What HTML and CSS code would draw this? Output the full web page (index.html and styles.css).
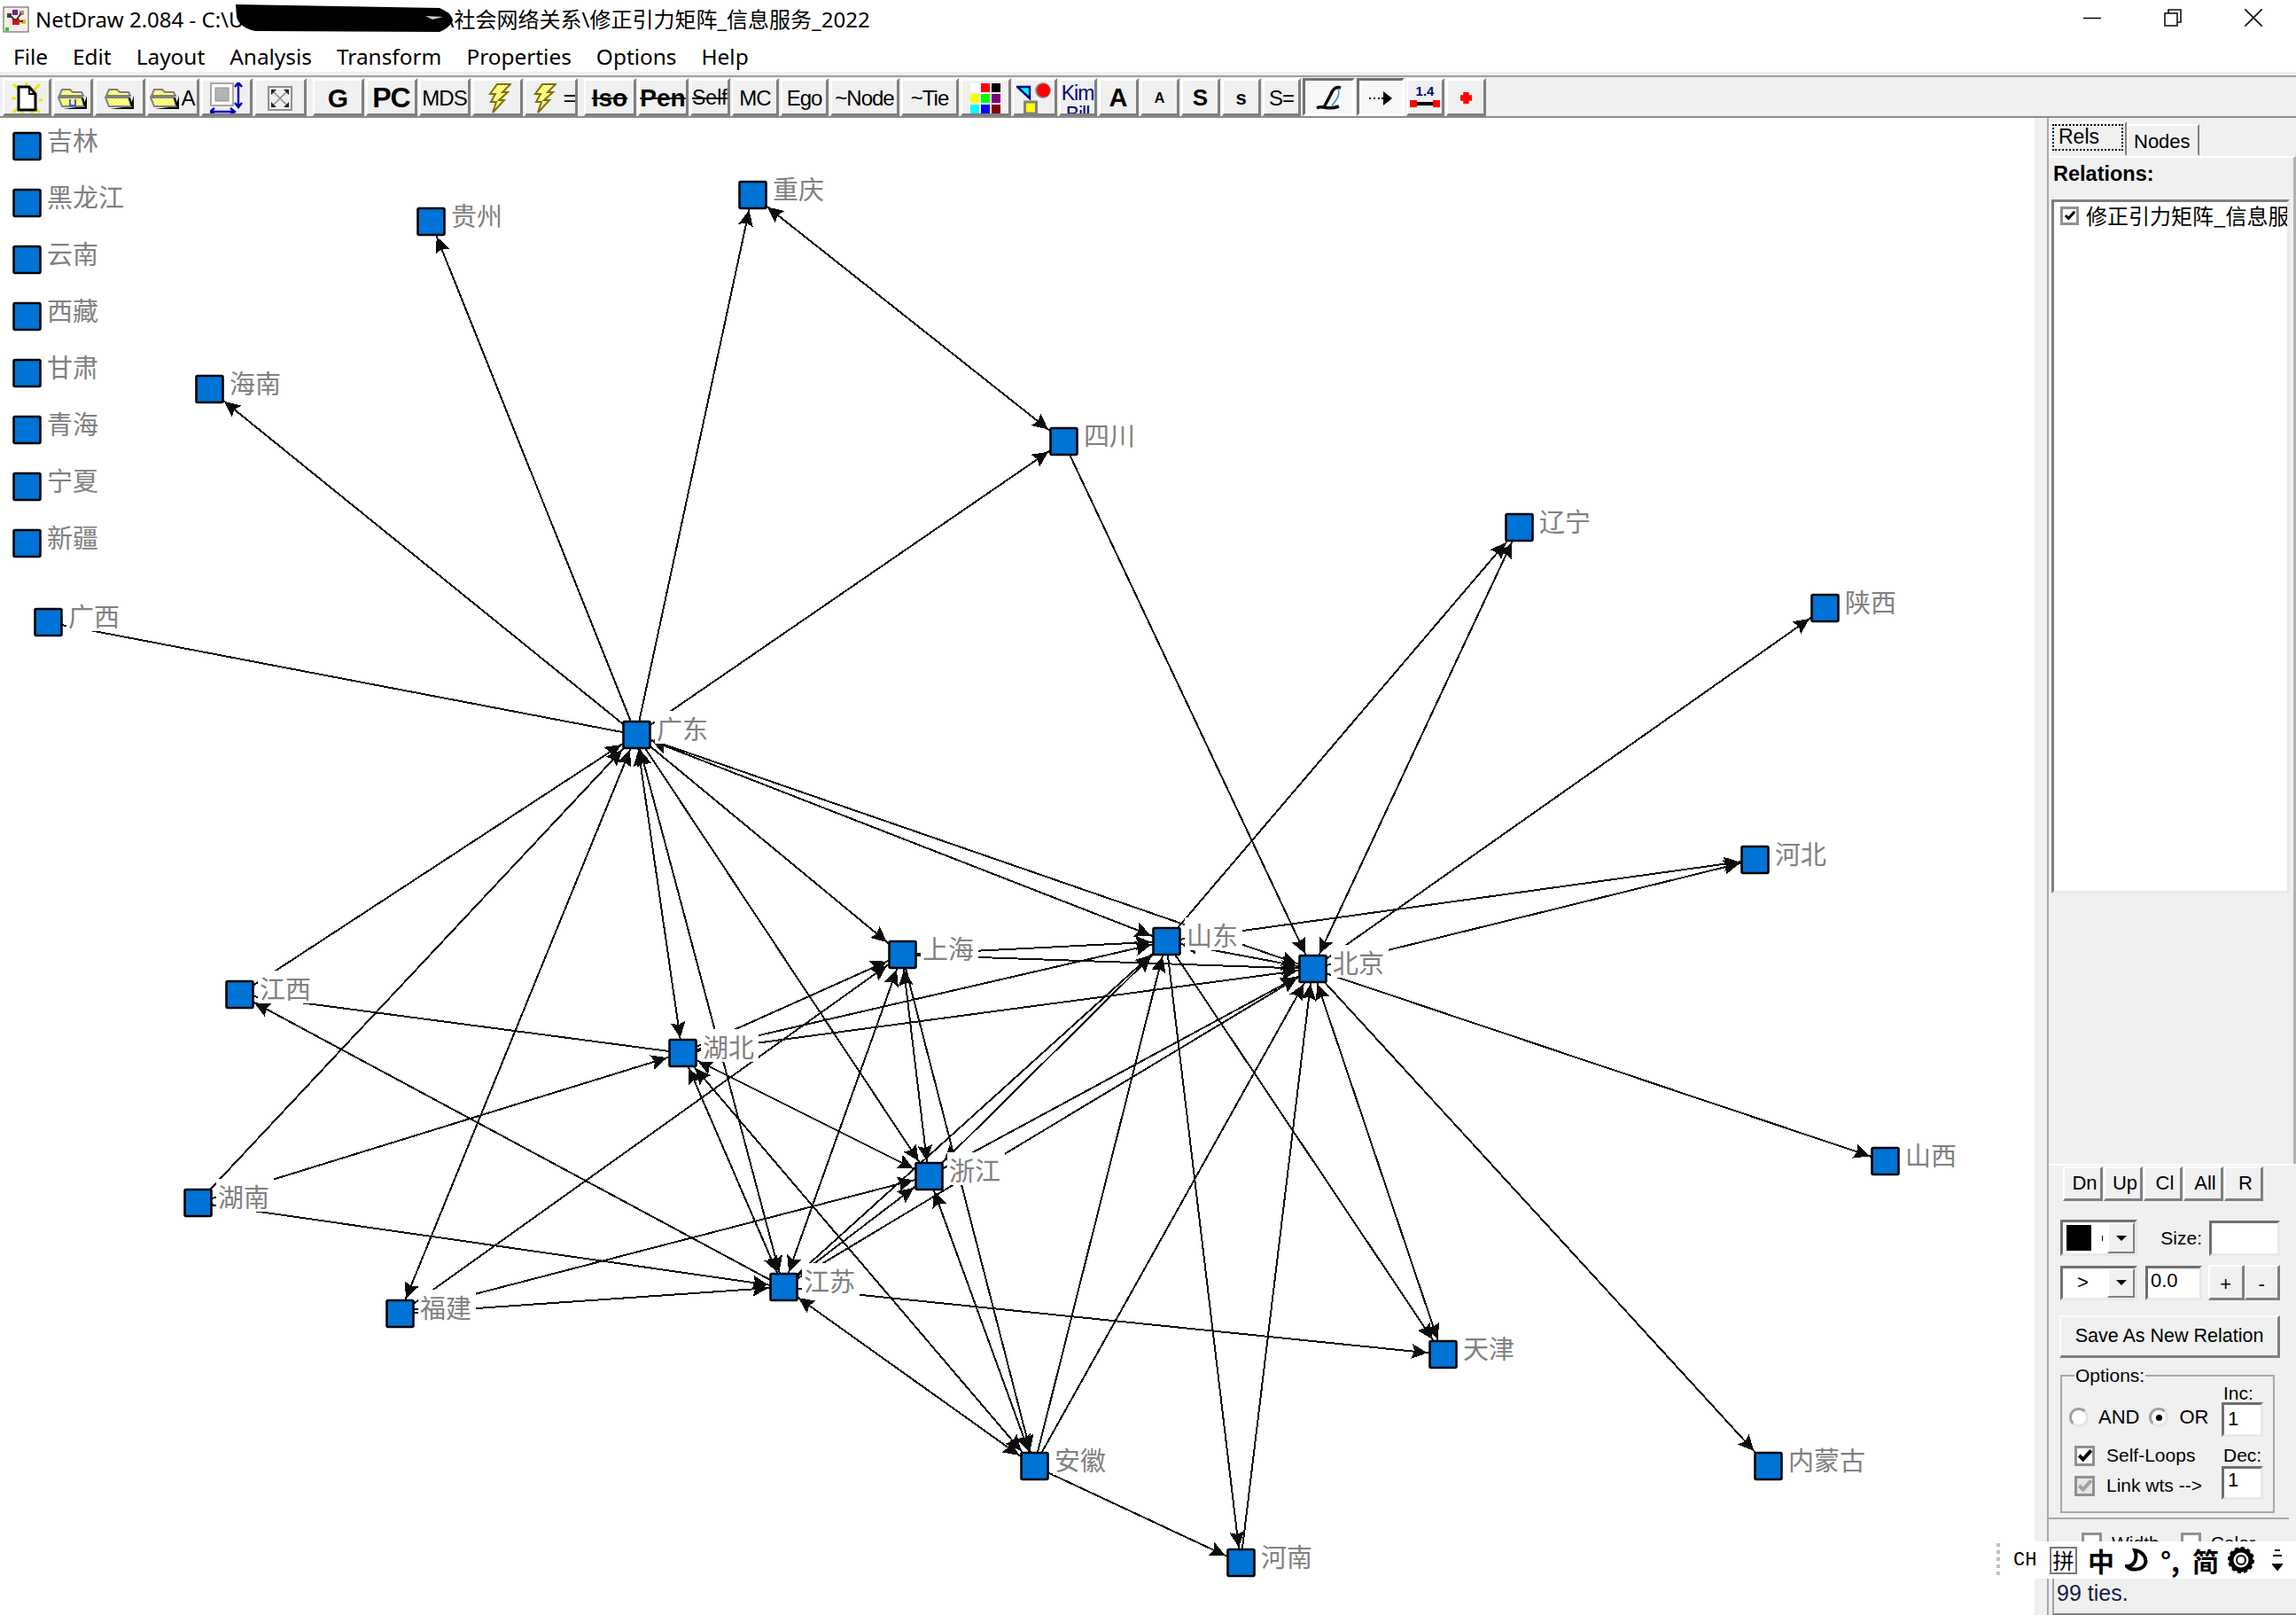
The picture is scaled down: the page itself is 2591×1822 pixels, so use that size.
FILE: index.html
```html
<!DOCTYPE html>
<html lang="zh">
<head>
<meta charset="utf-8">
<title>NetDraw 2.084</title>
<link rel="stylesheet" href="styles.css">
</head>
<body>
<div class="app">
  <header class="titlebar">
    <svg class="app-icon" width="30" height="30" viewBox="0 0 30 30">
      <rect x="1" y="1" width="28" height="28" fill="#f4f0e8" stroke="#555"/>
      <rect x="11" y="4" width="6" height="6" fill="#7a1f8a"/><rect x="5" y="8" width="5" height="5" fill="#444"/>
      <rect x="19" y="5" width="5" height="5" fill="#999"/><rect x="11" y="14" width="8" height="7" fill="#d11"/>
      <rect x="21" y="15" width="5" height="5" fill="#e0c000"/><rect x="3" y="24" width="4" height="4" fill="#2c2"/>
      <path d="M8 10 L14 16 M21 8 L15 16 M19 17 L23 17" stroke="#333" stroke-width="2"/>
    </svg>
    <span class="title-text">NetDraw 2.084 - C:\U</span>
    <svg class="blob" width="250" height="36" viewBox="0 0 250 36"><path d="M2 4 L232 8 Q246 14 247 22 Q244 30 232 35 L24 34 Q6 30 3 18 Z" fill="#000"/><path d="M216 17 L236 18 L224 21 Z" fill="#ccc"/></svg>
    <span class="title-text">\社会网络关系\修正引力矩阵_信息服务_2022</span>
    <div class="winctl">
      <svg width="20" height="20" viewBox="0 0 20 20"><path d="M0 10.5H20" stroke="#111" stroke-width="1.6"/></svg>
      <svg width="20" height="20" viewBox="0 0 20 20" fill="none" stroke="#111" stroke-width="1.6"><rect x="1" y="5" width="14" height="14"/><path d="M5 5V1H19V15H15"/></svg>
      <svg width="20" height="20" viewBox="0 0 20 20"><path d="M0 0L20 20M20 0L0 20" stroke="#111" stroke-width="1.6"/></svg>
    </div>
  </header>

  <nav class="menubar">
    <span>File</span><span>Edit</span><span>Layout</span><span>Analysis</span><span>Transform</span><span>Properties</span><span>Options</span><span>Help</span>
  </nav>

  <div class="toolbar">
    <svg class="defs" width="0" height="0">
      <defs>
        <pattern id="dith" width="4" height="4" patternUnits="userSpaceOnUse"><rect width="4" height="4" fill="#fff"/><rect width="2" height="2" fill="#ff0"/><rect x="2" y="2" width="2" height="2" fill="#ff0"/></pattern>
        <symbol id="folder" viewBox="0 0 34 26">
          <path d="M6 25H33V10L29 22Z" fill="#000"/>
          <path d="M2 10L5 3H14L17 6H27L29 10Z" fill="url(#dith)" stroke="#808080" stroke-width="2"/>
          <path d="M1 12H27L30 22H5Z" fill="url(#dith)" stroke="#808080" stroke-width="2"/>
          <path d="M28 12L31 22" stroke="#000" stroke-width="2"/>
        </symbol>
        <symbol id="bolt" viewBox="0 0 26 34">
          <path d="M10 1H25L16 10H22L12 19H18L5 33L9 21H3L8 12H2Z" fill="url(#dith)" stroke="#807000" stroke-width="2"/>
        </symbol>
      </defs>
    </svg>
    <button class="tb w55">
      <svg width="36" height="36" viewBox="0 0 36 36"><path d="M3 2L10 9M33 2L26 9M1 18H6M32 20H36M3 34L9 28M33 34L27 28M18 0V4M13 32V36M24 32V36" stroke="#e8e800" stroke-width="3"/><path d="M9 5H21L28 13V31H9Z" fill="#fff" stroke="#000" stroke-width="3"/><path d="M21 5V13H28" fill="none" stroke="#000" stroke-width="2"/></svg>
    </button>
    <button class="tb w45"><svg width="34" height="26"><use href="#folder"/><path d="M14 14V21H20V14" fill="none" stroke="#4060e0" stroke-width="2"/></svg></button>
    <button class="tb w57"><svg width="34" height="26"><use href="#folder"/></svg></button>
    <button class="tb w59"><span class="row-ic"><svg width="34" height="26"><use href="#folder"/></svg><span class="ic-a">A</span></span></button>
    <button class="tb w58">
      <svg width="38" height="36" viewBox="0 0 38 36"><rect x="1" y="1" width="25" height="25" fill="#fff" stroke="#a8a8a8" stroke-width="2"/><rect x="6" y="6" width="15" height="15" fill="#b4b4b4" stroke="#909090" stroke-width="1"/><path d="M32 1V27M28 5L32 0L36 5M28 23L32 28L36 23M1 33H27M5 29L0 33L5 36M23 29L28 33L23 36" fill="none" stroke="#0000c0" stroke-width="2.4"/></svg>
    </button>
    <button class="tb w59">
      <svg width="28" height="28" viewBox="0 0 28 28"><rect x="1" y="1" width="26" height="26" fill="none" stroke="#909090" stroke-width="2"/><path d="M7 7L21 21M21 7L7 21" stroke="#909090" stroke-width="1.6"/><path d="M4 4H10L4 10ZM24 4H18L24 10ZM4 24H10L4 18ZM24 24H18L24 18Z" fill="#222"/></svg>
    </button>
    <i class="tb-sep"></i>
    <button class="tb w58 t-g">G</button>
    <button class="tb w58 t-pc">PC</button>
    <button class="tb w58 t-m">MDS</button>
    <button class="tb w57 shift-a"><svg width="26" height="34"><use href="#bolt"/></svg></button>
    <button class="tb w60 shift-b"><span class="row-ic"><svg width="26" height="34"><use href="#bolt"/></svg><span class="ic-eq">=</span></span></button>
    <i class="tb-sep"></i>
    <button class="tb w59 t-s">Iso</button>
    <button class="tb w57 t-s">Pen</button>
    <button class="tb w45 t-self">Self</button>
    <button class="tb w53 t-m">MC</button>
    <button class="tb w54 t-m">Ego</button>
    <button class="tb w78 t-m">~Node</button>
    <button class="tb w65 t-m">~Tie</button>
    <button class="tb w57">
      <svg width="34" height="34" viewBox="0 0 34 34" class="crisp"><rect width="10" height="10" fill="#fff"/><rect x="12" width="10" height="10" fill="#f00"/><rect x="24" width="10" height="10" fill="#000"/><rect y="12" width="10" height="10" fill="#ff0"/><rect x="12" y="12" width="10" height="10" fill="#0f0"/><rect x="24" y="12" width="10" height="10" fill="#800080"/><rect y="24" width="10" height="10" fill="#0ff"/><rect x="12" y="24" width="10" height="10" fill="#00f"/><rect x="24" y="24" width="10" height="10" fill="#800000"/></svg>
    </button>
    <button class="tb w50">
      <svg width="42" height="36" viewBox="0 0 42 36"><path d="M1 5H15V18Z" fill="#0ff" stroke="#000080" stroke-width="2.4"/><circle cx="30" cy="9" r="9" fill="#909090"/><circle cx="30.500" cy="9" r="7.500" fill="#f00"/><rect x="9.500" y="22" width="13" height="13" fill="#ff0" stroke="#808080" stroke-width="3"/></svg>
    </button>
    <button class="tb w43 t-kim"><span>Kim</span><span>Bill</span></button>
    <button class="tb w45 t-ab">A</button>
    <button class="tb w44 t-as">A</button>
    <button class="tb w44 t-sb">S</button>
    <button class="tb w44 t-ss">s</button>
    <button class="tb w43 t-m">S=</button>
    <button class="tb tb-on w59">
      <svg width="30" height="30" viewBox="0 0 30 30"><path d="M22 4C19 6 17 10 15 14L8 26" fill="none" stroke="#e89030" stroke-width="2"/><path d="M25 5C26 6 28 12 18 23" fill="none" stroke="#3090e0" stroke-width="1.500"/><path d="M28 3C22 1 19 5 17 10L9 25M1 26C8 22 12 29 26 24" fill="none" stroke="#111" stroke-width="3.500"/></svg>
    </button>
    <button class="tb tb-on w54">
      <svg width="26" height="16" viewBox="0 0 26 16"><path d="M0 8H2M5 8H7M10 8H12M14 8H20" stroke="#000" stroke-width="2"/><path d="M16 0L26 8L16 16Z" fill="#000"/></svg>
    </button>
    <button class="tb w43">
      <svg width="34" height="32" viewBox="0 0 34 32"><text x="17" y="13" class="weight-label">1.4</text><rect y="18" width="8" height="8" fill="#f00"/><rect x="26" y="18" width="8" height="8" fill="#f00"/><rect x="8" y="20" width="18" height="4" fill="#000"/></svg>
    </button>
    <button class="tb w45">
      <svg width="13" height="13" viewBox="0 0 12 12"><path d="M3 0H9V3H12V9H9V12H3V9H0V3H3Z" fill="#f00"/></svg>
    </button>
  </div>

  <main class="workspace">
    <div class="canvas"><svg id="graph" class="graph" width="2296" height="1689" viewBox="0 133 2296 1689"></svg></div>

    <aside class="side">
      <div class="side-inner">
        <div class="tabs">
          <div class="tab tab-active"><span class="focus">Rels</span></div>
          <div class="tab">Nodes</div>
        </div>
        <section class="page">
          <div class="rel-title">Relations:</div>
          <div class="listbox">
            <div class="list-item"><span class="check small"><svg width="16" height="14" viewBox="0 0 16 14"><path d="M2 7L6 11L14 2" fill="none" stroke="#000" stroke-width="3.500"/></svg></span><span class="item-text">修正引力矩阵_信息服务_2022</span></div>
          </div>
        </section>
        <section class="controls">
          <div class="updown">
            <button class="btn ud w45b">Dn</button><button class="btn ud w44b">Up</button><button class="btn ud w44b">Cl</button><button class="btn ud w45b">All</button><button class="btn ud w44b">R</button>
          </div>
          <div class="row r1">
            <div class="combo c1"><span class="swatch"></span><span class="tick"></span><span class="drop"><i></i></span></div>
            <label class="size-label">Size:</label>
            <div class="input size-in"></div>
          </div>
          <div class="row r2">
            <div class="combo c2"><span class="combo-text">&gt;</span><span class="drop"><i></i></span></div>
            <div class="input val">0.0</div>
            <button class="btn pm">+</button><button class="btn pm">-</button>
          </div>
          <button class="btn save">Save As New Relation</button>
          <fieldset class="options">
            <legend>Options:</legend>
            <div class="opt-body">
              <div class="opt-left">
                <div class="radios">
                  <span class="radio"></span><span class="r-and">AND</span>
                  <span class="radio on"></span><span class="r-or">OR</span>
                </div>
                <div class="chk c-self"><span class="check"><svg width="18" height="16" viewBox="0 0 16 14"><path d="M2 7L6 11L14 2" fill="none" stroke="#000" stroke-width="3.500"/></svg></span><span>Self-Loops</span></div>
                <div class="chk c-link"><span class="check off"><svg width="18" height="16" viewBox="0 0 16 14"><path d="M2 7L6 11L14 2" fill="none" stroke="#a0a0a0" stroke-width="3.500"/></svg></span><span>Link wts --&gt;</span></div>
              </div>
              <div class="opt-right">
                <div class="o-lab">Inc:</div><div class="input o-in">1</div>
                <div class="o-lab dec">Dec:</div><div class="input o-in d2">1</div>
              </div>
            </div>
          </fieldset>
        </section>
        <section class="extra">
          <span class="check"></span><span class="ex-t">Width</span>
          <span class="check ex2"></span><span class="ex-t">Color</span>
        </section>
        <footer class="status">99 ties.</footer>
      </div>
    </aside>
  </main>

  <div class="ime">
    <i class="ime-handle"></i>
    <span class="ime-ch">CH</span>
    <span class="ime-pin">拼</span>
    <span class="ime-zh">中</span>
    <svg class="ime-moon" width="26" height="28" viewBox="0 0 26 28"><path d="M11 3C20 4 25 12 23 18C20 25 8 27 2 21C10 21 15 13 11 3Z" fill="#fff" stroke="#000" stroke-width="4"/></svg>
    <span class="ime-punct">°,</span>
    <span class="ime-zh s2">简</span>
    <svg class="ime-gear" width="30" height="30" viewBox="0 0 30 30"><circle cx="15" cy="15" r="11" fill="none" stroke="#000" stroke-width="5"/><circle cx="15" cy="15" r="13.500" fill="none" stroke="#000" stroke-width="3" stroke-dasharray="4 3"/><circle cx="15" cy="15" r="5" fill="none" stroke="#000" stroke-width="2"/></svg>
    <svg class="ime-arrows" width="12" height="26" viewBox="0 0 12 26"><path d="M1 8H11M1 18H11L6 24Z" stroke="#000" stroke-width="2"/><path d="M3 2H9" stroke="#000" stroke-width="2"/></svg>
  </div>
</div>
<script src="graph.js"></script>
</body>
</html>
```

FILE: styles.css
```css
* { box-sizing: border-box; }
html, body { margin: 0; padding: 0; background: #fff; }
body { font-family: "Liberation Sans", "Noto Sans CJK SC", sans-serif; color: #000; overflow: hidden; }
.app { width: 2591px; height: 1822px; display: flex; flex-direction: column; position: relative; overflow: hidden; }

.titlebar { height: 44px; display: flex; align-items: center; padding-left: 3px; flex: none; font-family: "Noto Sans", "Noto Sans CJK SC", sans-serif; font-size: 24px; }
.app-icon { margin-right: 7px; flex: none; }
.title-text { white-space: nowrap; line-height: 30px; }
.blob { flex: none; margin-left: -12px; margin-right: -10px; position: relative; top: -3px; }
.winctl { margin-left: auto; display: flex; gap: 71px; padding-right: 38px; position: relative; top: -2px; }

.menubar { height: 37px; display: flex; gap: 28px; padding: 2px 0 0 15px; align-items: center; flex: none; font-family: "Noto Sans", sans-serif; font-size: 24.400px; white-space: nowrap; }

.toolbar { height: 52px; flex: none; background: #f0f0f0; padding: 7px 0 0 3px; display: flex; gap: 2px; border-bottom: 2px solid #8c8c8c; position: relative; }
.toolbar::before { content: ""; position: absolute; left: 0; right: 0; top: 4px; height: 2px; background: #a0a0a0; }
.defs { position: absolute; }
.tb { height: 43px; padding: 2px 0 0; margin: 0; flex: none; background: #f0f0f0; border: 2px solid; border-color: #fff #808080 #808080 #fff; border-top-width: 3px; border-bottom-width: 3px; border-right-width: 3px; display: flex; align-items: center; justify-content: center; overflow: hidden; font-family: "Liberation Sans", sans-serif; color: #000; white-space: nowrap; }
.tb-on { background: #f8f8f8; border-color: #707070 #fff #fff #707070; border-width: 3px; }
.tb-sep { width: 3px; flex: none; }
.w43 { width: 43px; } .w44 { width: 44px; } .w45 { width: 45px; } .w50 { width: 50px; } .w53 { width: 53px; } .w54 { width: 54px; } .w55 { width: 55px; } .w57 { width: 57px; } .w58 { width: 58px; } .w59 { width: 59px; } .w60 { width: 60px; } .w65 { width: 65px; } .w78 { width: 78px; }
.shift-a { padding-left: 5px; }
.shift-b { padding-left: 10px; }
.row-ic { display: flex; align-items: center; }
.ic-a { font-size: 24px; margin-left: 1px; }
.ic-eq { font-size: 26px; margin-left: 7px; }
.t-g { font-size: 30px; font-weight: bold; }
.t-pc { font-size: 32px; font-weight: bold; letter-spacing: -1px; }
.t-m { font-size: 24px; letter-spacing: -1px; }
.t-s { font-size: 28px; font-weight: bold; text-decoration: line-through; }
.t-self { font-size: 23px; text-decoration: line-through; justify-content: flex-start; }
.t-kim { flex-direction: column; justify-content: flex-start; color: #000080; font-size: 23px; line-height: 24px; letter-spacing: -1px; padding-top: 2px; }
.t-kim span { display: block; }
.t-ab { font-size: 29px; font-weight: bold; }
.t-as { font-size: 16px; font-weight: bold; }
.t-sb { font-size: 26px; font-weight: bold; }
.t-ss { font-size: 22px; font-weight: bold; }
.weight-label { font: bold 15px "Liberation Sans", sans-serif; fill: #000080; text-anchor: middle; }
.crisp { shape-rendering: crispEdges; }

.workspace { flex: 1; display: flex; min-height: 0; }
.canvas { width: 2296px; background: #fff; overflow: hidden; flex: none; }
.graph { display: block; }
.edge { stroke: #0c0c0c; stroke-width: 2; shape-rendering: crispEdges; }
.head { fill: #0c0c0c; shape-rendering: crispEdges; }
.lab-bg { fill: #fff; }
.lab { font-family: "Noto Sans CJK SC", sans-serif; font-size: 29px; fill: #808080; }
.node { fill: #0073d6; stroke: #000; stroke-width: 2.6; }

.side { width: 295px; flex: none; background: #f0f0f0; padding-left: 14px; }
.side-inner { height: 100%; display: flex; flex-direction: column; border-left: 2px solid #a8a8a8; font-size: 22px; }

.tabs { height: 43px; flex: none; display: flex; padding-top: 4px; align-items: flex-end; }
.tab { height: 36px; width: 82px; border: 2px solid; border-color: #fff #808080 transparent #fff; font-size: 22px; padding: 5px 0 0 6px; }
.tab-active { width: 88px; height: 39px; padding: 1px 0 0 2px; }
.focus { display: block; height: 30px; width: 80px; border: 2px dotted #000; padding-left: 5px; line-height: 24px; font-size: 23px; }

.page { height: 1137px; flex: none; border-top: 2px solid #fff; border-right: 3px solid #b0b0b0; padding: 5px 4px 0 3px; }
.rel-title { font-weight: bold; font-size: 23.500px; height: 42px; line-height: 26px; padding-left: 2px; }
.listbox { height: 783px; background: #fff; border: 3px solid; border-color: #808080 #e8e8e8 #e8e8e8 #808080; padding: 0 0 0 7px; overflow: hidden; }
.list-item { display: flex; align-items: center; gap: 8px; white-space: nowrap; }
.item-text { font-family: "Noto Sans CJK SC", sans-serif; font-size: 24px; line-height: 30px; }

.check { width: 23px; height: 23px; flex: none; background: #fff; border: 3px solid #909090; display: inline-flex; align-items: center; justify-content: center; }
.check.small { width: 21px; height: 21px; }
.check.small svg { width: 14px; height: 12px; }
.check.off { background: #e6e6e6; }
.check svg { flex: none; }

.controls { height: 399px; flex: none; border-top: 2px solid #fff; padding-top: 1px; font-size: 22px; }
.btn { padding: 0; margin: 0; background: #f0f0f0; border: 2px solid; border-color: #fff #808080 #808080 #fff; border-right-width: 3px; border-bottom-width: 3px; font-family: "Liberation Sans", sans-serif; font-size: 22px; color: #000; }
.updown { display: flex; gap: 1px; margin-left: 16px; }
.ud { height: 39px; padding-left: 5px; }
.w45b { width: 45px; } .w44b { width: 44px; }
.row { display: flex; align-items: center; margin-left: 13px; width: 248px; }
.r1 { margin-top: 21px; height: 41px; }
.r2 { margin-top: 10px; height: 40px; }
.combo { width: 87px; background: #fff; border: 3px solid; border-color: #707070 #e8e8e8 #e8e8e8 #707070; display: flex; align-items: center; flex: none; }
.c1 { height: 41px; padding-left: 4px; }
.c2 { height: 39px; padding-left: 16px; }
.swatch { width: 28px; height: 29px; background: #000; flex: none; }
.tick { width: 1px; height: 6px; background: #000; margin-left: 12px; }
.combo-text { font-size: 22px; }
.drop { width: 31px; height: 100%; margin-left: auto; background: #f0f0f0; border: 2px solid; border-color: #fff #808080 #808080 #fff; display: flex; align-items: center; justify-content: center; flex: none; }
.drop i { width: 0; height: 0; border-left: 6px solid transparent; border-right: 6px solid transparent; border-top: 6px solid #000; }
.size-label { margin-left: auto; margin-right: 8px; font-size: 21px; }
.input { background: #fff; border: 3px solid; border-color: #707070 #e8e8e8 #e8e8e8 #707070; font-size: 22px; line-height: 30px; padding-left: 4px; flex: none; }
.size-in { width: 80px; height: 40px; }
.val { width: 64px; height: 39px; margin-left: 9px; line-height: 28px; padding-left: 3px; }
.pm { width: 41px; height: 40px; font-size: 22px; padding-top: 4px; }
.val + .pm { margin-left: 7px; }
.save { display: block; margin: 17px 0 0 12px; width: 249px; height: 48px; font-size: 21.500px; }

.options { margin: 10px 0 0 13px; padding: 0; width: 242px; height: 165px; border: 2px solid #a8a8a8; min-width: 0; }
.options legend { margin-left: 14px; padding: 0 1px; height: 20px; line-height: 20px; font-size: 21px; }
.opt-body { display: flex; }
.opt-left { width: 180px; flex: none; padding-left: 8px; }
.opt-right { width: 50px; flex: none; }
.radios { display: flex; align-items: center; height: 22px; margin-top: 26px; font-size: 22px; }
.radio { width: 22px; height: 22px; flex: none; border-radius: 50%; background: #fff; border: 3px solid #a0a0a0; border-right-color: #e4e4e4; border-bottom-color: #e4e4e4; display: flex; align-items: center; justify-content: center; }
.radio.on::after { content: ""; width: 7px; height: 7px; background: #000; border-radius: 50%; }
.r-and { margin: 0 11px; }
.r-or { margin-left: 12px; }
.chk { display: flex; align-items: center; gap: 13px; font-size: 21px; height: 24px; white-space: nowrap; margin-left: 6px; }
.c-self { margin-top: 20px; }
.c-link { margin-top: 10px; }
.o-lab { height: 20px; line-height: 20px; font-size: 21px; padding-left: 2px; }
.o-lab.dec { margin-top: 11px; height: 22px; }
.o-in { width: 47px; height: 39px; line-height: 32px; padding-left: 4px; }
.o-in.d2 { height: 38px; line-height: 26px; }

.extra { height: 69px; flex: none; margin-right: 8px; border-top: 2px solid #a8a8a8; padding: 15px 0 0 37px; display: flex; align-items: flex-start; font-size: 21px; overflow: hidden; }
.ex-t { margin-left: 11px; }
.ex2 { margin-left: 24px; }
.status { flex: 1; border-left: 2px solid #a0a0a0; border-bottom: 2px solid #808080; margin-left: 4px; font-size: 25px; padding: 2px 0 0 3px; color: #16204a; }

.ime { position: absolute; right: 0; top: 1739px; width: 341px; height: 42px; background: #fff; display: flex; align-items: center; font-family: "Noto Sans CJK SC", sans-serif; font-weight: bold; color: #000; }
.ime-handle { width: 4px; height: 38px; margin-left: 3px; background: repeating-linear-gradient(#c0c0c0 0 4px, #fff 4px 8px); flex: none; }
.ime-ch { margin-left: 15px; font: 22px "Liberation Mono", monospace; width: 25px; }
.ime-pin { margin-left: 16px; width: 31px; height: 31px; border: 2px solid #777; font-size: 24px; line-height: 25px; text-align: center; font-weight: normal; }
.ime-zh { margin-left: 12px; font-size: 30px; line-height: 34px; }
.ime-zh.s2 { margin-left: 12px; }
.ime-moon { margin-left: 12px; flex: none; }
.ime-punct { margin-left: 14px; font-size: 30px; line-height: 30px; width: 24px; }
.ime-gear { margin-left: 10px; flex: none; }
.ime-arrows { margin-left: 20px; flex: none; }
```

FILE: graph.js
```js
// Network data: page coordinates of each actor, and the directed ties between them.
var nodes = {
  "吉林":[30,165],"黑龙江":[30,229],"云南":[30,293],"西藏":[30,357],"甘肃":[30,421],"青海":[30,485],"宁夏":[30,549],"新疆":[30,613],
  "海南":[236,439],"贵州":[486,250],"重庆":[849,220],"四川":[1200,498],"辽宁":[1714,595],"陕西":[2059,686],"广西":[54,702],
  "广东":[718,829],"河北":[1980,970],"山东":[1316,1062],"北京":[1481,1093],"上海":[1018,1077],"江西":[270,1122],"湖北":[770,1188],
  "浙江":[1048,1327],"湖南":[223,1357],"福建":[451,1482],"江苏":[884,1452],"山西":[2127,1310],"天津":[1628,1528],"安徽":[1167,1654],
  "内蒙古":[1995,1654],"河南":[1400,1763]
};
var ties = [
  "广东>贵州","广东>重庆","广东>海南","广东>四川","四川>重庆","重庆>四川","四川>北京",
  "广西-广东","北京>辽宁","辽宁>北京","山东>辽宁","北京>陕西","北京>河北","山东>河北","北京>山西","北京>内蒙古",
  "北京>天津","天津>北京","山东>天津","山东>广东","广东>山东","北京>广东","广东>北京",
  "江西>广东","湖南>广东","福建>广东","广东>福建","广东>上海","广东>湖北","湖北>广东","广东>江苏","江苏>广东","广东>浙江",
  "江苏>江西","湖北-江西","湖南>湖北","湖南>江苏","福建>江苏","福建>上海","福建>浙江",
  "湖北>上海","湖北>山东","湖北>北京","湖北>浙江","浙江>湖北","江苏>湖北","湖北>江苏","安徽>湖北","湖北>安徽",
  "上海>山东","上海>北京","上海>浙江","浙江>上海","江苏>上海","上海>安徽","山东>北京","北京>山东",
  "浙江>山东","山东>浙江","江苏>山东","江苏>北京","浙江>北京","江苏>浙江","安徽>浙江","浙江>安徽",
  "安徽>山东","安徽>北京","山东>河南","河南>北京","江苏>安徽","安徽>江苏","江苏>天津","安徽>河南","上海>江苏"
];
var NS = "http://www.w3.org/2000/svg", svg = document.getElementById("graph");
var H = 16, LEN = 18, WID = 8.5;

function add(tag, attrs, text) {
  var el = document.createElementNS(NS, tag);
  for (var k in attrs) el.setAttribute(k, attrs[k]);
  if (text) el.textContent = text;
  svg.appendChild(el);
  return el;
}

ties.forEach(function (t) {
  var directed = t.indexOf(">") > 0, p = t.split(directed ? ">" : "-");
  var a = nodes[p[0]], b = nodes[p[1]];
  add("line", { "class": "edge", x1: a[0], y1: a[1], x2: b[0], y2: b[1] });
});
ties.forEach(function (t) {
  if (t.indexOf(">") < 0) return;
  var p = t.split(">"), a = nodes[p[0]], b = nodes[p[1]];
  var dx = b[0] - a[0], dy = b[1] - a[1], d = Math.sqrt(dx * dx + dy * dy);
  var ux = dx / d, uy = dy / d;
  var s = (H + 1) / Math.max(Math.abs(ux), Math.abs(uy));
  var tx = b[0] - ux * s, ty = b[1] - uy * s;
  var bx = tx - ux * LEN, by = ty - uy * LEN, nx = tx - ux * (LEN - 3), ny = ty - uy * (LEN - 3);
  add("polygon", { "class": "head", points: [tx, ty, bx - uy * WID, by + ux * WID, nx, ny, bx + uy * WID, by - ux * WID].join(" ") });
});
Object.keys(nodes).forEach(function (name) {
  var c = nodes[name];
  add("rect", { "class": "lab-bg", x: c[0] + 21, y: c[1] - 27, width: name.length * 29 + 7, height: 37 });
});
Object.keys(nodes).forEach(function (name) {
  var c = nodes[name];
  add("text", { "class": "lab", x: c[0] + 23, y: c[1] + 4.5 }, name);
  add("rect", { "class": "node", x: c[0] - 14.5, y: c[1] - 15, width: 30, height: 30, rx: 1.5 });
});
```
